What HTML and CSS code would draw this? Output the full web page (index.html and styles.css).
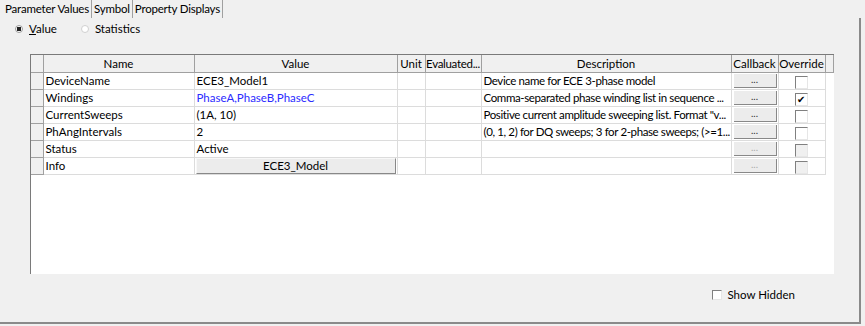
FILE: index.html
```html
<!DOCTYPE html>
<html lang="en">
<head>
    <meta charset="UTF-8">
    <title>Parameter Values</title>
    <link rel="stylesheet" href="styles.css">
</head>
<body>
    <div class="tabs">
        <span class="tab active">Parameter Values</span>
        <span class="tab">Symbol</span>
        <span class="tab">Property Displays</span>
    </div>

    <div class="panel">
        <div class="mode">
            <label class="radio"><span class="dot on"></span><span><u>V</u>alue</span></label>
            <label class="radio"><span class="dot"></span><span>Statistics</span></label>
        </div>

        <div class="grid">
            <table>
                <colgroup>
                    <col class="c-rh">
                    <col class="c-name">
                    <col class="c-value">
                    <col class="c-unit">
                    <col class="c-eval">
                    <col class="c-desc">
                    <col class="c-cb">
                    <col class="c-ov">
                    <col class="c-fill">
                </colgroup>
                <thead>
                    <tr>
                        <th class="rh"></th>
                        <th>Name</th>
                        <th>Value</th>
                        <th>Unit</th>
                        <th class="tight">Evaluated...</th>
                        <th>Description</th>
                        <th>Callback</th>
                        <th>Override</th>
                        <th class="fill"></th>
                    </tr>
                </thead>
                <tbody>
                    <tr>
                        <td class="rh"></td>
                        <td>DeviceName</td>
                        <td>ECE3_Model1</td>
                        <td></td>
                        <td></td>
                        <td class="desc">Device name for ECE 3-phase model</td>
                        <td><span class="dots">...</span></td>
                        <td><span class="check"></span></td>
                    </tr>
                    <tr>
                        <td class="rh"></td>
                        <td>Windings</td>
                        <td class="blue">PhaseA,PhaseB,PhaseC</td>
                        <td></td>
                        <td></td>
                        <td class="desc">Comma-separated phase winding list in sequence ...</td>
                        <td><span class="dots">...</span></td>
                        <td><span class="check checked">&#10004;</span></td>
                    </tr>
                    <tr>
                        <td class="rh"></td>
                        <td>CurrentSweeps</td>
                        <td>(1A, 10)</td>
                        <td></td>
                        <td></td>
                        <td class="desc">Positive current amplitude sweeping list. Format "v...</td>
                        <td><span class="dots">...</span></td>
                        <td><span class="check"></span></td>
                    </tr>
                    <tr>
                        <td class="rh"></td>
                        <td>PhAngIntervals</td>
                        <td>2</td>
                        <td></td>
                        <td></td>
                        <td class="desc">(0, 1, 2) for DQ sweeps; 3 for 2-phase sweeps; (&gt;=1...</td>
                        <td><span class="dots">...</span></td>
                        <td><span class="check"></span></td>
                    </tr>
                    <tr>
                        <td class="rh"></td>
                        <td>Status</td>
                        <td>Active</td>
                        <td></td>
                        <td></td>
                        <td class="desc"></td>
                        <td><span class="dots off">...</span></td>
                        <td><span class="check off"></span></td>
                    </tr>
                    <tr>
                        <td class="rh"></td>
                        <td>Info</td>
                        <td class="btn-cell"><span class="cell-btn">ECE3_Model</span></td>
                        <td></td>
                        <td></td>
                        <td class="desc"></td>
                        <td><span class="dots off">...</span></td>
                        <td><span class="check off"></span></td>
                    </tr>
                </tbody>
            </table>
        </div>

        <div class="footer">
            <label class="show"><span class="check"></span><span>Show Hidden</span></label>
        </div>
    </div>
</body>
</html>
```

FILE: styles.css
```css
body {
    margin: 0;
    width: 865px;
    height: 326px;
    background-color: #f0f0f0;
    font-family: 'Lato', 'Noto Sans', sans-serif;
    font-size: 11.5px;
    color: #000;
    overflow: hidden;
}

.tabs {
    display: flex;
    height: 18px;
    padding-left: 4px;
    letter-spacing: -0.2px;
}

.tab {
    padding: 1px 2px 0 2px;
    border-right: 1px solid #a0a0a0;
    line-height: 16px;
    height: 17px;
}

.tab.active {
    padding-left: 1px;
}

.panel {
    width: 859px;
    height: 304px;
    border-right: 2px solid #8a8a8a;
    border-bottom: 2px solid #8a8a8a;
}

.mode {
    display: flex;
    height: 22px;
    padding: 0 0 0 15px;
    gap: 24px;
    line-height: 14px;
}

.radio {
    display: flex;
    align-items: center;
    gap: 6px;
}

.dot {
    width: 8px;
    height: 8px;
    border-radius: 50%;
    border: 1px solid #d0d0d0;
    background: #fff;
    box-sizing: border-box;
    position: relative;
}

.dot.on {
    border-color: #9a9a9a;
}

.dot.on::after {
    content: "";
    position: absolute;
    left: 1px;
    top: 1px;
    width: 4px;
    height: 4px;
    background: #222;
}

.grid {
    margin: 14px 0 0 30px;
    width: 803px;
    height: 219px;
    border-left: 1px solid #7a7a7a;
    border-top: 1px solid #7a7a7a;
    background-color: #fff;
}

table {
    border-collapse: collapse;
    table-layout: fixed;
    width: 802px;
}

.c-rh { width: 12px; }
.c-name { width: 151px; }
.c-value { width: 203px; }
.c-unit { width: 28px; }
.c-eval { width: 56px; }
.c-desc { width: 250px; }
.c-cb { width: 47px; }
.c-ov { width: 47px; }
.c-fill { width: 8px; }

th {
    height: 17px;
    padding: 0;
    font-weight: normal;
    background-color: #f0f0f0;
    border-right: 1px solid #a0a0a0;
    border-bottom: 1px solid #a0a0a0;
    white-space: nowrap;
    overflow: hidden;
}

th.tight {
    letter-spacing: -0.3px;
}

td {
    height: 16px;
    padding: 0 0 0 2px;
    border-right: 1px solid #dcdcdc;
    border-bottom: 1px solid #dcdcdc;
    white-space: nowrap;
    overflow: hidden;
    line-height: 16px;
}

td.desc {
    letter-spacing: -0.38px;
}

td.rh {
    background-color: #f0f0f0;
    border-right: 1px solid #a0a0a0;
    border-bottom: 1px solid #a0a0a0;
    padding: 0;
}

td.blue {
    color: #2b2bff;
}

td.btn-cell {
    padding: 0 1px 0 1px;
}

.cell-btn {
    display: block;
    height: 14px;
    line-height: 14px;
    text-align: center;
    background-color: #ececec;
    border-top: 1px solid #f8f8f8;
    border-left: 1px solid #f8f8f8;
    border-right: 1px solid #888;
    border-bottom: 1px solid #888;
}

.dots {
    display: block;
    width: 42px;
    height: 13px;
    line-height: 10px;
    text-align: center;
    font-size: 10px;
    color: #333;
    background-color: #ececec;
    border-right: 1px solid #888;
    border-bottom: 1px solid #888;
}

.dots.off {
    color: #aaa;
}

.check {
    display: inline-block;
    box-sizing: border-box;
    width: 13px;
    height: 13px;
    background: #fff;
    border-top: 1px solid #808080;
    border-left: 1px solid #808080;
    border-right: 1px solid #e6e6e6;
    border-bottom: 1px solid #e6e6e6;
    font-size: 10px;
    line-height: 11px;
    text-align: center;
    vertical-align: middle;
}

td .check {
    margin-left: 14px;
}

.check.off {
    background: #f0f0f0;
}

.footer {
    display: flex;
    justify-content: flex-end;
    padding: 14px 64px 0 0;
}

.show {
    display: flex;
    align-items: center;
    gap: 5px;
}

.show .check {
    width: 10px;
    height: 10px;
}
```
